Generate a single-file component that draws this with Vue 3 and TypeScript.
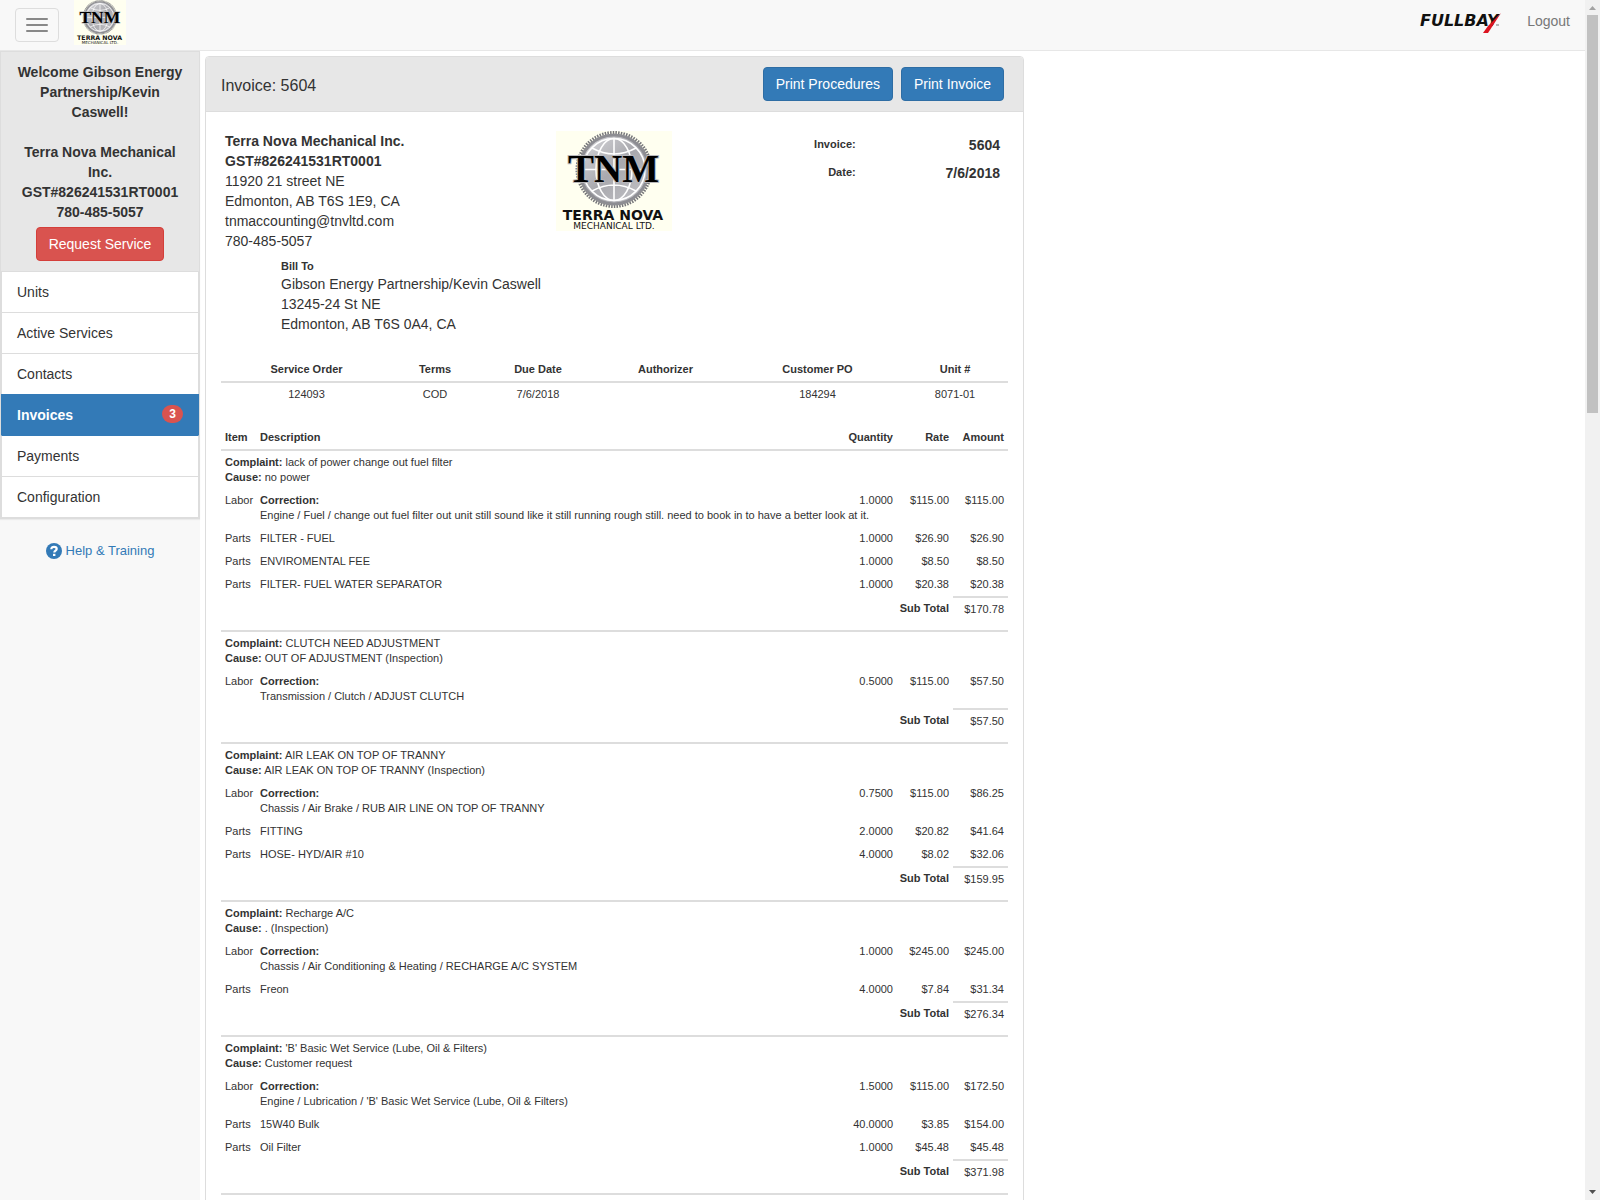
<script setup lang="ts">
interface Line {
  item: 'Labor' | 'Parts'
  text: string
  qty: string
  rate: string
  amount: string
}
interface Job {
  complaint: string
  cause: string
  lines: Line[]
  total: string
}

const nav: { label: string; badge?: number }[] = [
  { label: 'Units' },
  { label: 'Active Services' },
  { label: 'Contacts' },
  { label: 'Invoices', badge: 3 },
  { label: 'Payments' },
  { label: 'Configuration' },
]

const jobs: Job[] = [
  {
    complaint: 'lack of power change out fuel filter',
    cause: 'no power',
    lines: [
      { item: 'Labor', text: 'Engine / Fuel / change out fuel filter out unit still sound like it still running rough still. need to book in to have a better look at it.', qty: '1.0000', rate: '$115.00', amount: '$115.00' },
      { item: 'Parts', text: 'FILTER - FUEL', qty: '1.0000', rate: '$26.90', amount: '$26.90' },
      { item: 'Parts', text: 'ENVIROMENTAL FEE', qty: '1.0000', rate: '$8.50', amount: '$8.50' },
      { item: 'Parts', text: 'FILTER- FUEL WATER SEPARATOR', qty: '1.0000', rate: '$20.38', amount: '$20.38' },
    ],
    total: '$170.78',
  },
  {
    complaint: 'CLUTCH NEED ADJUSTMENT',
    cause: 'OUT OF ADJUSTMENT (Inspection)',
    lines: [
      { item: 'Labor', text: 'Transmission / Clutch / ADJUST CLUTCH', qty: '0.5000', rate: '$115.00', amount: '$57.50' },
    ],
    total: '$57.50',
  },
  {
    complaint: 'AIR LEAK ON TOP OF TRANNY',
    cause: 'AIR LEAK ON TOP OF TRANNY (Inspection)',
    lines: [
      { item: 'Labor', text: 'Chassis / Air Brake / RUB AIR LINE ON TOP OF TRANNY', qty: '0.7500', rate: '$115.00', amount: '$86.25' },
      { item: 'Parts', text: 'FITTING', qty: '2.0000', rate: '$20.82', amount: '$41.64' },
      { item: 'Parts', text: 'HOSE- HYD/AIR #10', qty: '4.0000', rate: '$8.02', amount: '$32.06' },
    ],
    total: '$159.95',
  },
  {
    complaint: 'Recharge A/C',
    cause: '. (Inspection)',
    lines: [
      { item: 'Labor', text: 'Chassis / Air Conditioning & Heating / RECHARGE A/C SYSTEM', qty: '1.0000', rate: '$245.00', amount: '$245.00' },
      { item: 'Parts', text: 'Freon', qty: '4.0000', rate: '$7.84', amount: '$31.34' },
    ],
    total: '$276.34',
  },
  {
    complaint: "'B' Basic Wet Service (Lube, Oil & Filters)",
    cause: 'Customer request',
    lines: [
      { item: 'Labor', text: "Engine / Lubrication / 'B' Basic Wet Service (Lube, Oil & Filters)", qty: '1.5000', rate: '$115.00', amount: '$172.50' },
      { item: 'Parts', text: '15W40 Bulk', qty: '40.0000', rate: '$3.85', amount: '$154.00' },
      { item: 'Parts', text: 'Oil Filter', qty: '1.0000', rate: '$45.48', amount: '$45.48' },
    ],
    total: '$371.98',
  },
]
</script>

<template>
  <div class="window">
    <!-- Company logo, drawn once and reused in the bar and on the invoice -->
    <svg class="defs" width="0" height="0" aria-hidden="true">
      <defs>
        <linearGradient id="steel" x1="0" y1="0" x2="1" y2="1">
          <stop offset="0" stop-color="#dcdce0" />
          <stop offset="0.5" stop-color="#a9a9ae" />
          <stop offset="1" stop-color="#c4c4c8" />
        </linearGradient>
      </defs>
      <symbol id="tnm" viewBox="0 0 116 100">
        <rect width="116" height="100" fill="#fffff0" />
        <circle cx="58" cy="38.5" r="37" fill="none" stroke="#77777b" stroke-width="3" stroke-dasharray="1.5 1.2" />
        <circle cx="58" cy="38.5" r="34.5" fill="url(#steel)" stroke="#8d8d92" stroke-width="3" />
        <g fill="none" stroke="#fff" stroke-width="1.6">
          <circle cx="58" cy="38.5" r="31" />
          <ellipse cx="58" cy="38.5" rx="18" ry="31" />
          <path d="M58 7.500v62M27 38.500h62M36 17q22 12 44 0M36 60q22-12 44 0" />
        </g>
        <text x="12" y="51" font-family="Liberation Serif, serif" font-weight="700" font-size="39" fill="#000" stroke="#b8b8bc" stroke-width="2" paint-order="stroke">TNM</text>
        <text x="57" y="89" text-anchor="middle" font-family="DejaVu Sans, sans-serif" font-weight="700" font-size="14" fill="#111">TERRA NOVA</text>
        <text x="58" y="98" text-anchor="middle" font-family="DejaVu Sans, sans-serif" font-size="9" fill="#111">MECHANICAL LTD.</text>
      </symbol>
    </svg>

    <div class="page">
      <header class="navbar">
        <button class="toggle" type="button" aria-label="Toggle menu"><i></i><i></i><i></i></button>
        <a class="brand" href="#" aria-label="Terra Nova Mechanical"><svg width="52" height="45"><use href="#tnm" /></svg></a>
        <a class="fullbay" href="#" aria-label="Fullbay">
          <svg width="84" height="22" viewBox="0 0 84 22">
            <text x="2" y="14" font-family="DejaVu Sans, sans-serif" font-weight="700" font-style="italic" font-size="16" fill="#111">FULLBAY</text>
            <path d="M83 1 74 15l4 0 6-6Z" fill="#f8f8f8" />
            <path d="M83 1 70 21h-5l5-7Z" fill="#dc1420" />
            <path d="M78 13h3" stroke="#777" stroke-width="1" />
          </svg>
        </a>
        <a class="logout" href="#">Logout</a>
      </header>

      <div class="columns">
        <aside class="sidebar">
          <section class="account">
            <div class="welcome">
              <strong>Welcome Gibson Energy Partnership/Kevin Caswell!</strong>
              <strong class="shop">Terra Nova Mechanical Inc.<br />GST#826241531RT0001<br />780-485-5057</strong>
              <button class="btn danger" type="button">Request Service</button>
            </div>
            <nav>
              <a v-for="n in nav" :key="n.label" href="#" :class="{ active: n.badge }">
                <span>{{ n.label }}</span>
                <span v-if="n.badge" class="badge">{{ n.badge }}</span>
              </a>
            </nav>
          </section>
          <a class="help" href="#">
            <svg width="16" height="16" viewBox="0 0 16 16" aria-hidden="true">
              <circle cx="8" cy="8" r="8" fill="#337ab7" />
              <path d="M5.300 6.200C5.300 4.500 6.500 3.800 8 3.800s2.700.8 2.700 2.200C10.700 7.800 8.300 7.600 8.300 9.600" fill="none" stroke="#fff" stroke-width="2.200" />
              <path d="M7 10.800h2.400v2.200H7z" fill="#fff" />
            </svg>
            Help &amp; Training
          </a>
        </aside>

        <main>
          <article class="panel">
            <div class="heading">
              <h1>Invoice: 5604</h1>
              <button class="btn primary" type="button">Print Procedures</button>
              <button class="btn primary" type="button">Print Invoice</button>
            </div>
            <div class="body">
              <div class="top">
                <address>
                  <b>Terra Nova Mechanical Inc.</b><br />
                  <b>GST#826241531RT0001</b><br />
                  11920 21 street NE<br />
                  Edmonton, AB T6S 1E9, CA<br />
                  tnmaccounting@tnvltd.com<br />
                  780-485-5057
                </address>
                <svg class="logo" width="116" height="100"><use href="#tnm" /></svg>
                <table class="meta">
                  <tbody>
                    <tr><th scope="row">Invoice:</th><td>5604</td></tr>
                    <tr><th scope="row">Date:</th><td>7/6/2018</td></tr>
                  </tbody>
                </table>
              </div>
              <address class="billto">
                <b>Bill To</b>
                Gibson Energy Partnership/Kevin Caswell<br />
                13245-24 St NE<br />
                Edmonton, AB T6S 0A4, CA
              </address>

              <table class="order">
                <colgroup><col class="o1" /><col class="o2" /><col class="o3" /><col class="o4" /><col class="o5" /><col class="o6" /></colgroup>
                <thead>
                  <tr><th>Service Order</th><th>Terms</th><th>Due Date</th><th>Authorizer</th><th>Customer PO</th><th>Unit #</th></tr>
                </thead>
                <tbody>
                  <tr><td>124093</td><td>COD</td><td>7/6/2018</td><td></td><td>184294</td><td>8071-01</td></tr>
                </tbody>
              </table>

              <table class="items">
                <colgroup><col class="c-item" /><col /><col class="c-qty" /><col class="c-rate" /><col class="c-amount" /></colgroup>
                <thead>
                  <tr><th>Item</th><th>Description</th><th class="num">Quantity</th><th class="num">Rate</th><th class="num">Amount</th></tr>
                </thead>
                <tbody v-for="j in jobs" :key="j.complaint">
                  <tr class="job">
                    <td colspan="5"><b>Complaint:</b> {{ j.complaint }}<br /><b>Cause:</b> {{ j.cause }}</td>
                  </tr>
                  <tr v-for="l in j.lines" :key="l.text">
                    <td>{{ l.item }}</td>
                    <td class="text"><template v-if="l.item === 'Labor'"><b>Correction:</b><br /></template>{{ l.text }}</td>
                    <td class="num">{{ l.qty }}</td>
                    <td class="num">{{ l.rate }}</td>
                    <td class="num">{{ l.amount }}</td>
                  </tr>
                  <tr class="subtotal">
                    <th colspan="4" scope="row">Sub Total</th>
                    <td>{{ j.total }}</td>
                  </tr>
                </tbody>
                <tbody><tr class="job"><td colspan="5"></td></tr></tbody>
              </table>
            </div>
          </article>
        </main>
      </div>
    </div>

    <div class="scrollbar" aria-hidden="true">
      <svg width="15" height="15"><path d="M4 10h7L7.500 6Z" fill="#a3a3a3" /></svg>
      <div class="track"><div class="thumb"></div></div>
      <svg width="15" height="15"><path d="M4 5h7L7.500 9Z" fill="#505050" /></svg>
    </div>
  </div>
</template>

<style>
body {
  margin: 0;
}
</style>

<style scoped>
* {
  box-sizing: border-box;
}
.window {
  display: flex;
  height: 100vh;
  overflow: hidden;
  background: #fff;
  color: #333;
  font: 14px/20px "Liberation Sans", Arial, sans-serif;
}
.defs {
  position: absolute;
}
svg {
  display: block;
  flex: none;
}
a {
  text-decoration: none;
}
.page {
  flex: 1;
  min-width: 0;
  display: flex;
  flex-direction: column;
}
.navbar {
  flex: none;
  display: flex;
  align-items: flex-start;
  height: 51px;
  padding: 0 15px;
  background: #f8f8f8;
  border-bottom: 1px solid #e7e7e7;
}
.toggle {
  display: flex;
  flex-direction: column;
  gap: 4px;
  width: 44px;
  height: 34px;
  margin: 8px 15px 0 0;
  padding: 9px 10px;
  background: transparent;
  border: 1px solid #ddd;
  border-radius: 4px;
}
.toggle i {
  width: 22px;
  height: 2px;
  border-radius: 1px;
  background: #888;
}
.fullbay {
  margin: 12px 25px 0 auto;
}
.logout {
  margin-top: 11px;
  color: #777;
}
.columns {
  flex: 1;
  display: flex;
  min-height: 0;
}
.sidebar {
  flex: none;
  width: 200px;
  background: #f8f8f8;
}
.account {
  border: 1px solid #ddd;
  background: #e7e7e7;
  box-shadow: 0 1px 1px rgba(0, 0, 0, 0.05);
}
.welcome {
  padding: 10px 15px;
  text-align: center;
}
.welcome strong {
  display: block;
}
.welcome .shop {
  margin: 20px 0 5px;
}
.btn {
  height: 34px;
  padding: 0 12px;
  border: 1px solid;
  border-radius: 4px;
  color: #fff;
  font: inherit;
}
.danger {
  background: #d9534f;
  border-color: #d43f3a;
}
.primary {
  background: #337ab7;
  border-color: #2e6da4;
}
nav a {
  display: flex;
  justify-content: space-between;
  height: 41px;
  padding: 10px 15px;
  border: 1px solid #ddd;
  border-bottom: 0;
  background: #fff;
  color: #333;
}
nav a:last-child {
  height: 42px;
  border-bottom: 1px solid #ddd;
}
nav a.active {
  background: #337ab7;
  border-color: #337ab7;
  color: #fff;
  font-weight: 700;
}
nav a.active + a {
  border-top-color: #337ab7;
}
.badge {
  height: 18px;
  padding: 0 7px;
  border-radius: 10px;
  background: #d9534f;
  font-size: 12px;
  line-height: 18px;
}
.help {
  display: flex;
  justify-content: center;
  align-items: center;
  gap: 4px;
  margin-top: 22px;
  color: #337ab7;
  font-size: 13px;
}
main {
  flex: 1;
  min-width: 0;
  padding: 5px;
}
.panel {
  max-width: 819px;
  border: 1px solid #ddd;
  border-radius: 4px;
}
.heading {
  display: flex;
  align-items: center;
  gap: 8px;
  padding: 10px 19px 10px 15px;
  border-bottom: 1px solid #ddd;
  border-radius: 3px 3px 0 0;
  background: #e7e7e7;
}
h1 {
  margin: 4px auto 0 0;
  font-size: 16px;
  font-weight: 400;
}
.body {
  padding: 15px;
}
.top {
  display: flex;
  align-items: flex-start;
  padding: 4px 8px 4px 4px;
}
address {
  font-style: normal;
}
.top address {
  flex: 331;
}
.meta {
  flex: 328;
  border-spacing: 0;
}
.meta th,
.meta td {
  padding: 4px 0;
  text-align: right;
  font-weight: 700;
}
.meta th {
  width: 56%;
  font-size: 11px;
  line-height: 18px;
  vertical-align: top;
}
.billto {
  margin: 4px 0 24px 60px;
}
.billto b {
  display: block;
  font-size: 11px;
  line-height: 15px;
}
.order,
.items {
  width: 100%;
  border-spacing: 0;
  table-layout: fixed;
  font-size: 11px;
  line-height: 15px;
}
.order {
  margin-bottom: 20px;
  text-align: center;
}
.order th,
.order td,
.items th,
.items td {
  padding: 4px;
  vertical-align: top;
}
.order th {
  border-bottom: 2px solid #ddd;
}
.o1 { width: 171px; }
.o2 { width: 86px; }
.o3 { width: 120px; }
.o4 { width: 135px; }
.o5 { width: 169px; }
.o6 { width: 106px; }
.c-item { width: 35px; }
.c-qty { width: 54px; }
.c-rate { width: 56px; }
.c-amount { width: 55px; }
.items th {
  text-align: left;
}
.items .text {
  white-space: nowrap;
}
.items .num,
.items .subtotal th,
.items .subtotal td {
  text-align: right;
}
.items .job td {
  border-top: 2px solid #ddd;
}
.items .subtotal th {
  padding: 5px 4px 14px;
}
.items .subtotal td {
  border-top: 2px solid #ddd;
}
.scrollbar {
  flex: none;
  display: flex;
  flex-direction: column;
  width: 15px;
  background: #f1f1f1;
}
.track {
  flex: 1;
  padding: 0 2px;
}
.thumb {
  height: 34%;
  background: #c1c1c1;
}
</style>
